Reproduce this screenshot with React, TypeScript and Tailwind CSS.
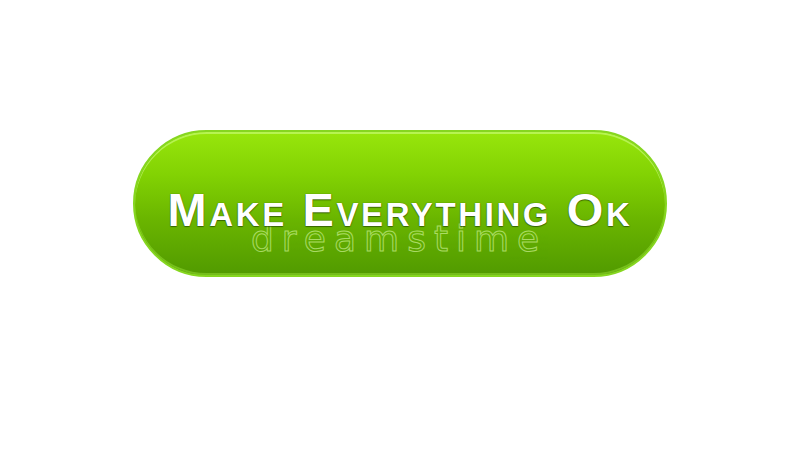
export default function App() {
  return (
    <main className="flex h-[450px] w-[800px] justify-center bg-white pt-[130px]">
      <button
        type="button"
        className="relative flex h-[147px] w-[534px] flex-col items-center justify-start overflow-hidden rounded-full border-2 border-[#86d620] bg-[linear-gradient(180deg,#98e60c_0%,#82d203_30%,#6bb600_60%,#519a00_100%)] shadow-[inset_0_2px_0_rgba(210,255,140,0.55),inset_0_-2px_0_rgba(160,230,60,0.45)]"
      >
        <span className="relative z-10 mt-[60px] block text-center font-['Liberation_Sans',Arial,sans-serif] text-[47px] font-bold leading-[36px] tracking-[2.6px] text-white [font-variant:small-caps] [text-shadow:0_0_1px_rgba(30,60,0,0.9),0_1px_1px_rgba(30,60,0,0.6)]">
          Make Everything Ok
        </span>
        {/* faint outlined watermark under the label */}
        <span className="pointer-events-none absolute left-[116px] top-[97px] block font-['DejaVu_Sans',sans-serif] text-[36px] leading-[20px] tracking-[8px] opacity-70 [-webkit-text-fill-color:transparent] [-webkit-text-stroke-width:1px] [-webkit-text-stroke-color:#c9ef8f]">
          dreamstime
        </span>
      </button>
    </main>
  );
}
